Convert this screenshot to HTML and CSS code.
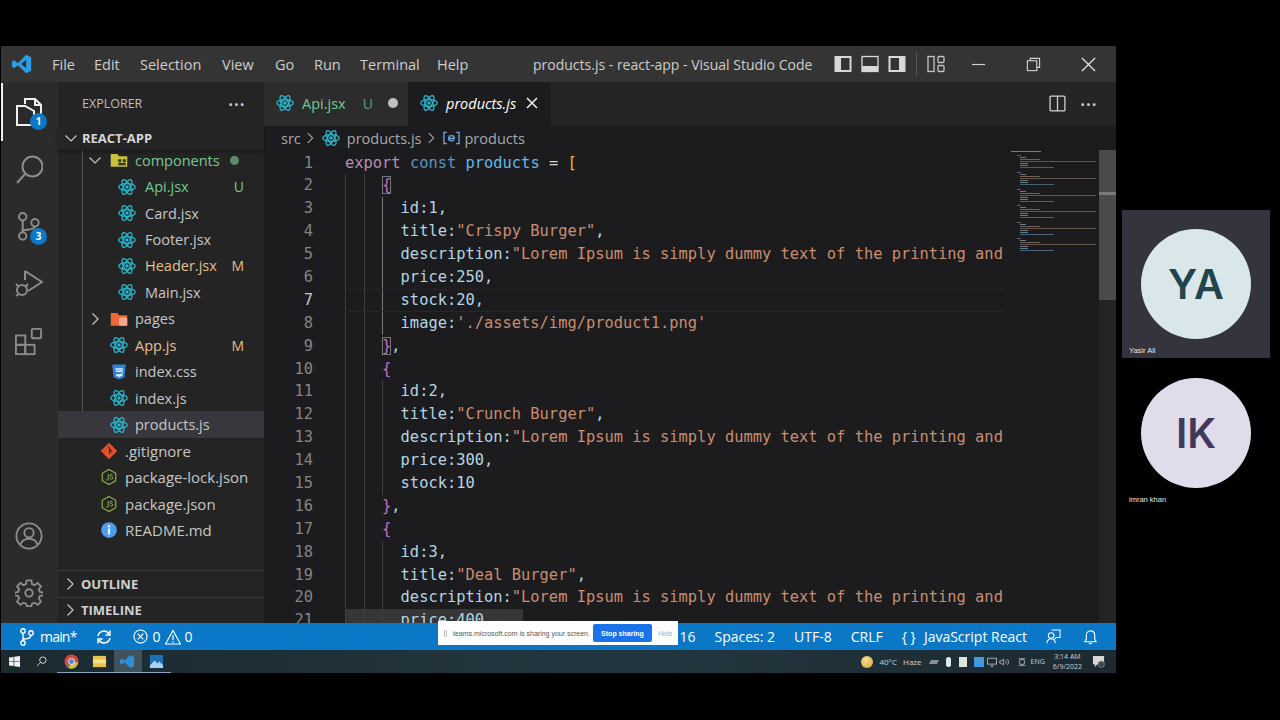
FILE: index.html
```html
<!DOCTYPE html>
<html lang="en">
<head>
<meta charset="utf-8">
<title>products.js - react-app - Visual Studio Code</title>
<link rel="stylesheet" href="styles.css">
</head>
<body>
<svg class="defs" width="0" height="0" aria-hidden="true">
  <symbol id="react" viewBox="0 0 24 24">
    <g fill="none" stroke="#26b8cf" stroke-width="1.7">
      <ellipse cx="12" cy="12" rx="11" ry="4.4"/>
      <ellipse cx="12" cy="12" rx="11" ry="4.4" transform="rotate(60 12 12)"/>
      <ellipse cx="12" cy="12" rx="11" ry="4.4" transform="rotate(120 12 12)"/>
    </g>
    <circle cx="12" cy="12" r="2.3" fill="#26b8cf"/>
  </symbol>
  <symbol id="node" viewBox="0 0 24 24">
    <path d="M12 2l9 5v10l-9 5-9-5V7z" fill="none" stroke="#8cb24a" stroke-width="1.6"/>
    <path d="M11 8v7c0 1.600-2.500 1.600-3 .3M17 9.500c-.8-1.500-3.800-1.300-3.800.4 0 2 4 1.100 4 3.300 0 1.800-3.400 1.900-4.300.3" fill="none" stroke="#8cb24a" stroke-width="1.300"/>
  </symbol>
  <symbol id="chev-d" viewBox="0 0 16 16"><path d="M2.500 5.500L8 11l5.500-5.500" fill="none" stroke="currentColor" stroke-width="1.200"/></symbol>
  <symbol id="chev-r" viewBox="0 0 16 16"><path d="M5.500 2.500L11 8l-5.500 5.500" fill="none" stroke="currentColor" stroke-width="1.200"/></symbol>
</svg>

<div class="stage">
  <main class="window">
    <header class="titlebar">
      <svg class="logo" viewBox="0 0 24 24"><path d="M17 1l6 3v16l-6 3-10-9.500-4.500 3.500L0 15V9l2.500-1.500L7 11zM17 7l-6 5 6 5z" fill="#2b9fe6" fill-rule="evenodd"/></svg>
      <nav class="menu">
        <span class="m-file">File</span><span class="m-edit">Edit</span><span class="m-sel">Selection</span><span class="m-view">View</span><span class="m-go">Go</span><span class="m-run">Run</span><span class="m-term">Terminal</span><span class="m-help">Help</span>
      </nav>
      <div class="wintitle">products.js - react-app - Visual Studio Code</div>
      <div class="layout-icons">
        <svg viewBox="0 0 18 18"><rect x=".5" y="1" width="17" height="16" fill="#d8d8d8"/><rect x="7" y="3" width="8.500" height="12" fill="#333"/></svg>
        <svg viewBox="0 0 18 18"><rect x="1" y="1.500" width="16" height="15" fill="none" stroke="#d8d8d8" stroke-width="1.300"/><rect x="1" y="11" width="16" height="6" fill="#d8d8d8"/></svg>
        <svg viewBox="0 0 18 18"><rect x=".5" y="1" width="17" height="16" fill="#d8d8d8"/><rect x="2.500" y="3" width="8.500" height="12" fill="#333"/></svg>
        <i class="tsep"></i>
        <svg viewBox="0 0 18 18" fill="none" stroke="#c4c4c4" stroke-width="1.300"><rect x="1" y="1.500" width="6" height="15"/><rect x="11" y="1.500" width="6" height="6" rx="1"/><rect x="11" y="10.500" width="6" height="6" rx="1"/></svg>
      </div>
      <div class="wincontrols">
        <svg viewBox="0 0 16 16"><path d="M1 8h14" stroke="#d0d0d0" stroke-width="1.200"/></svg>
        <svg viewBox="0 0 16 16" fill="none" stroke="#d0d0d0" stroke-width="1.200"><rect x="1.500" y="4" width="10" height="10.500"/><path d="M4.500 4V1.500h10V11H11.500"/></svg>
        <svg viewBox="0 0 16 16"><path d="M1 1l14 14M15 1L1 15" stroke="#e0e0e0" stroke-width="1.400"/></svg>
      </div>
    </header>

    <div class="workbench">
      <aside class="activity">
        <div class="act-top">
          <div class="act-item is-on">
            <svg viewBox="0 0 28 30" fill="none" stroke="#f0f0f0" stroke-width="2"><path d="M10 7V2h10l6 6v15H19"/><path d="M20 2v6h6"/><path d="M10 9H2v19h17V14z"/></svg>
            <b class="badge">1</b>
          </div>
          <div class="act-item">
            <svg viewBox="0 0 28 30" fill="none" stroke="#8c8c8c" stroke-width="2"><circle cx="17.500" cy="12.500" r="10"/><path d="M10 20l-8 9"/></svg>
          </div>
          <div class="act-item">
            <svg viewBox="0 0 28 30" fill="none" stroke="#8c8c8c" stroke-width="2"><circle cx="7.700" cy="4.700" r="3.700"/><circle cx="7.700" cy="24" r="3.700"/><circle cx="20" cy="10.700" r="3.700"/><path d="M7.700 8.400v12M7.700 18c7 0 12-1 12.300-3.600"/></svg>
            <b class="badge">3</b>
          </div>
          <div class="act-item">
            <svg viewBox="0 0 28 30" fill="none" stroke="#8c8c8c" stroke-width="2"><path d="M10 2l17 11-14 9"/><path d="M10 2v9"/><circle cx="7" cy="21" r="5"/><path d="M1 15l3 3M1 27l3-2M13 15l-3 3"/></svg>
          </div>
          <div class="act-item">
            <svg viewBox="0 0 30 30" fill="none" stroke="#8c8c8c" stroke-width="2"><rect x="1" y="8" width="10" height="10"/><rect x="1" y="18" width="10" height="10"/><rect x="11" y="18" width="10" height="10"/><rect x="18" y="1" width="10" height="10" rx="1"/></svg>
          </div>
        </div>
        <div class="act-bottom">
          <div class="act-item">
            <svg viewBox="0 0 30 30" fill="none" stroke="#8c8c8c" stroke-width="2"><circle cx="15" cy="15" r="13.500"/><circle cx="15" cy="11.500" r="5"/><path d="M5.500 24.500c2-5 5-6.500 9.500-6.500s7.500 1.500 9.500 6.500"/></svg>
          </div>
          <div class="act-item">
            <svg viewBox="0 0 30 30" fill="none" stroke="#8c8c8c" stroke-width="2"><circle cx="15" cy="15" r="4"/><path d="M12.500 1.500h5l.8 4 2.600 1.100 3.400-2.300 3.500 3.500-2.300 3.400 1.100 2.600 4 .8v2.800l-4 .8-1.100 2.600 2.300 3.400-3.500 3.500-3.400-2.300-2.600 1.100-.8 2.600h-5l-.8-2.600-2.600-1.100-3.400 2.300-3.500-3.500 2.300-3.400-1.100-2.600-4-.8v-2.800l4-.8 1.100-2.600-2.300-3.400 3.500-3.500 3.400 2.300 2.600-1.100z"/></svg>
          </div>
        </div>
      </aside>

      <aside class="sidebar">
        <div class="side-head"><span>EXPLORER</span><span class="dots">···</span></div>
        <div class="root-row"><svg class="chev"><use href="#chev-d"/></svg><span>REACT-APP</span></div>
        <div class="tree">
          <div class="guide">
            <div class="row r-folder green"><svg class="chev"><use href="#chev-d"/></svg>
              <svg class="ficon" viewBox="0 0 24 24"><path d="M1 4h9l2 3h11v14H1z" fill="#c9c23a"/><rect x="11" y="11" width="4" height="4" fill="#33352a"/><rect x="17" y="11" width="4" height="4" fill="#33352a"/><rect x="11" y="16" width="10" height="3" fill="#33352a"/></svg>
              <span>components</span><i class="dot"></i></div>
            <div class="row r-file green"><svg class="ficon"><use href="#react"/></svg><span>Api.jsx</span><b class="st">U</b></div>
            <div class="row r-file"><svg class="ficon"><use href="#react"/></svg><span>Card.jsx</span></div>
            <div class="row r-file"><svg class="ficon"><use href="#react"/></svg><span>Footer.jsx</span></div>
            <div class="row r-file yellow"><svg class="ficon"><use href="#react"/></svg><span>Header.jsx</span><b class="st">M</b></div>
            <div class="row r-file"><svg class="ficon"><use href="#react"/></svg><span>Main.jsx</span></div>
            <div class="row r-folder"><svg class="chev"><use href="#chev-r"/></svg>
              <svg class="ficon" viewBox="0 0 24 24"><path d="M1 4h9l2 3h11v14H1z" fill="#f0683a"/><rect x="12" y="10" width="11" height="11" rx="2" fill="#f6a98f"/></svg>
              <span>pages</span></div>
            <div class="row r-top yellow"><svg class="ficon"><use href="#react"/></svg><span>App.js</span><b class="st">M</b></div>
            <div class="row r-top"><svg class="ficon" viewBox="0 0 24 24"><path d="M3 2h18l-1.700 17L12 22l-7.300-3z" fill="#2f83d6"/><path d="M7 7h10l-.6 10-4.400 1.500L8 17v-2h4l4-1V12H8V10h8V9H7z" fill="#e6f0fa"/></svg><span>index.css</span></div>
            <div class="row r-top"><svg class="ficon"><use href="#react"/></svg><span>index.js</span></div>
            <div class="row r-top is-sel"><svg class="ficon"><use href="#react"/></svg><span>products.js</span></div>
          </div>
          <div class="row r-root"><svg class="ficon" viewBox="0 0 24 24"><path d="M12 1l11 11-11 11L1 12z" fill="#e2522f"/><path d="M11 6l2 3v7M13 10l3 3" stroke="#3a2520" stroke-width="1.600" fill="none"/></svg><span>.gitignore</span></div>
          <div class="row r-root"><svg class="ficon"><use href="#node"/></svg><span>package-lock.json</span></div>
          <div class="row r-root"><svg class="ficon"><use href="#node"/></svg><span>package.json</span></div>
          <div class="row r-root"><svg class="ficon" viewBox="0 0 24 24"><circle cx="12" cy="12" r="10.500" fill="#4d9cf0"/><rect x="10.500" y="10" width="3" height="8" fill="#eaf3ff"/><rect x="10.500" y="5.500" width="3" height="3" fill="#eaf3ff"/></svg><span>README.md</span></div>
        </div>
        <div class="panel-row"><svg class="chev"><use href="#chev-r"/></svg><span>OUTLINE</span></div>
        <div class="panel-row"><svg class="chev"><use href="#chev-r"/></svg><span>TIMELINE</span></div>
      </aside>

      <section class="editor">
        <div class="tabs">
          <div class="tab tab-api"><svg class="ficon"><use href="#react"/></svg><span class="t-name">Api.jsx</span><b class="t-u">U</b><i class="t-dot"></i></div>
          <div class="tab tab-on"><svg class="ficon"><use href="#react"/></svg><span class="t-name">products.js</span>
            <svg class="t-x" viewBox="0 0 12 12"><path d="M1 1l10 10M11 1L1 11" stroke="#f0f0f0" stroke-width="1.500"/></svg></div>
          <div class="tab-actions">
            <svg viewBox="0 0 16 16" fill="none" stroke="#d4d4d4" stroke-width="1.200"><rect x="1" y="1" width="14" height="14" rx="1"/><path d="M8 1v14"/></svg>
            <span class="dots">···</span>
          </div>
        </div>
        <div class="crumbs">
          <span>src</span><svg class="cchev c1"><use href="#chev-r"/></svg>
          <svg class="ficon"><use href="#react"/></svg><span>products.js</span><svg class="cchev"><use href="#chev-r"/></svg>
          <svg class="sym" viewBox="0 0 18 14" fill="none" stroke="#6fa8dc" stroke-width="1.400"><path d="M4 1H1v12h3M14 1h3v12h-3"/><path d="M6 7.500h6c0-2-1-3-3-3s-3 1.500-3 3 1 2.500 3 2.500c1 0 2-.3 2.500-1"/></svg>
          <span>products</span>
        </div>
        <div class="edit-body">
          <div class="gutter">
            <span>1</span><span>2</span><span>3</span><span>4</span><span>5</span><span>6</span><span class="cur">7</span><span>8</span><span>9</span><span>10</span><span>11</span><span>12</span><span>13</span><span>14</span><span>15</span><span>16</span><span>17</span><span>18</span><span>19</span><span>20</span><span>21</span>
          </div>
          <div class="code">
            <div class="ln"><span class="kw">export</span> <span class="st2">const</span> <span class="var">products</span> <span class="pl">=</span> <span class="br1">[</span></div>
            <div class="ln g">    <span class="br2 match">{</span></div>
            <div class="ln g3 a"><span class="pl2">      id:1,</span></div>
            <div class="ln g3 a"><span class="pl2">      title:</span><span class="str">"Crispy Burger"</span><span class="pl2">,</span></div>
            <div class="ln g3 a"><span class="pl2">      description:</span><span class="str">"Lorem Ipsum is simply dummy text of the printing and</span></div>
            <div class="ln g3 a"><span class="pl2">      price:250,</span></div>
            <div class="ln g3 a cur"><span class="pl2">      stock:20,</span></div>
            <div class="ln g3 a"><span class="pl2">      image:</span><span class="str">'./assets/img/product1.png'</span></div>
            <div class="ln g">    <span class="br2 match">}</span><span class="pl2">,</span></div>
            <div class="ln g">    <span class="br2">{</span></div>
            <div class="ln g3"><span class="pl2">      id:2,</span></div>
            <div class="ln g3"><span class="pl2">      title:</span><span class="str">"Crunch Burger"</span><span class="pl2">,</span></div>
            <div class="ln g3"><span class="pl2">      description:</span><span class="str">"Lorem Ipsum is simply dummy text of the printing and</span></div>
            <div class="ln g3"><span class="pl2">      price:300,</span></div>
            <div class="ln g3"><span class="pl2">      stock:10</span></div>
            <div class="ln g">    <span class="br2">}</span><span class="pl2">,</span></div>
            <div class="ln g">    <span class="br2">{</span></div>
            <div class="ln g3"><span class="pl2">      id:3,</span></div>
            <div class="ln g3"><span class="pl2">      title:</span><span class="str">"Deal Burger"</span><span class="pl2">,</span></div>
            <div class="ln g3"><span class="pl2">      description:</span><span class="str">"Lorem Ipsum is simply dummy text of the printing and</span></div>
            <div class="ln g3 hi"><span class="pl2">      price:400,</span></div>
          </div>
          <div class="minimap">
            <svg viewBox="0 0 91 110" width="91" height="110">
              <rect x="3" y="1" width="30" height="1" fill="#7a7a7a"/>
              <g id="mm" opacity=".75">
                <rect x="9" y="5" width="4" height="1" fill="#8a6f8a"/>
                <rect x="12" y="7" width="6" height="1" fill="#7d9cab"/>
                <rect x="12" y="9" width="20" height="1" fill="#8d7a66"/>
                <rect x="12" y="11" width="76" height="1" fill="#7b6a5a"/>
                <rect x="12" y="13" width="8" height="1" fill="#7d9cab"/>
                <rect x="12" y="15" width="8" height="1" fill="#7d9cab"/>
                <rect x="12" y="17" width="34" height="1" fill="#55788f"/>
              </g>
              <use href="#mm" y="17"/><use href="#mm" y="34"/><use href="#mm" y="50"/><use href="#mm" y="67"/><use href="#mm" y="83"/>
            </svg>
          </div>
          <div class="scrollbar"><div class="thumb"><i></i></div></div>
        </div>
      </section>
    </div>

    <footer class="statusbar">
      <div class="sb-left">
        <svg class="branch" viewBox="0 0 14 18" fill="none" stroke="#fff" stroke-width="1.400"><circle cx="3" cy="3" r="2.200"/><circle cx="3" cy="15" r="2.200"/><circle cx="11" cy="5" r="2.200"/><path d="M3 5.200v7.600M3 11c5 0 8-1 8-3.800"/></svg>
        <span class="sb-main">main*</span>
        <svg class="sync" viewBox="0 0 16 16" fill="none" stroke="#fff" stroke-width="1.500"><path d="M2 7a6 6 0 0 1 11-2M14 9a6 6 0 0 1-11 2"/><path d="M14 1.500V6h-4.500M2 14.500V10h4.500"/></svg>
        <svg class="err" viewBox="0 0 16 16" fill="none" stroke="#fff" stroke-width="1.200"><circle cx="8" cy="8" r="7"/><path d="M5 5l6 6M11 5l-6 6"/></svg>
        <span>0</span>
        <svg class="warn" viewBox="0 0 16 16" fill="none" stroke="#fff" stroke-width="1.200"><path d="M8 1.500L15.500 15H.5z"/><path d="M8 6v5M8 12v1.500"/></svg>
        <span>0</span>
      </div>
      <div class="sb-right">
        <span>16</span>
        <span>Spaces: 2</span>
        <span>UTF-8</span>
        <span>CRLF</span>
        <span class="lang"><b>{ }</b>JavaScript React</span>
        <svg class="feed" viewBox="0 0 16 16" fill="none" stroke="#fff" stroke-width="1.100"><circle cx="5.500" cy="7" r="3"/><path d="M1 15c.5-3 2-4.500 4.500-4.500S9.500 12 10 15M6 1h9v8h-4l-2 2"/></svg>
        <svg class="bell" viewBox="0 0 16 16" fill="none" stroke="#fff" stroke-width="1.200"><path d="M8 1.500c-3 0-4.500 2.500-4.500 5v4L2 13h12l-1.500-2.500v-4c0-2.500-1.500-5-4.500-5zM6.500 14.500c.5 1 2.500 1 3 0"/></svg>
      </div>
    </footer>

    <footer class="taskbar">
      <div class="tb-left">
        <svg class="winlogo" viewBox="0 0 12 12" fill="#f0f0f0"><path d="M0 1.700L5 1v4.700H0zM5.700 .9L12 0v5.700H5.700zM0 6.300h5V11l-5-.7zM5.700 6.300H12V12l-6.300-.9z"/></svg>
        <svg class="tsearch" viewBox="0 0 12 12" fill="none" stroke="#ddd" stroke-width="1"><circle cx="7.500" cy="4.500" r="3.500"/><path d="M5 7l-4 4"/></svg>
        <div class="tb-app">
          <svg viewBox="0 0 16 16"><circle cx="8" cy="8" r="7.500" fill="#d9483b"/><path d="M8 8L14.500 12A7.500 7.500 0 0 1 3 14z" fill="#3f9b52"/><path d="M8 8L5 15A7.500 7.500 0 0 0 15 9z" fill="#e5b83a"/><circle cx="8" cy="8" r="3.200" fill="#4a8be0" stroke="#eee"/></svg>
        </div>
        <div class="tb-app">
          <svg viewBox="0 0 16 16"><rect x="1" y="2" width="14" height="12" fill="#e8c04e"/><rect x="1" y="6" width="14" height="4" fill="#f5df8a"/></svg>
        </div>
        <div class="tb-app tb-on">
          <svg viewBox="0 0 16 16"><path d="M11 1l4 2v10l-4 2-6-6-3 2-2-1V6l2-1 3 2z" fill="#2b8fd9"/></svg>
        </div>
        <div class="tb-app">
          <svg viewBox="0 0 16 16"><rect x="1" y="1" width="14" height="14" fill="#1f6fb5"/><path d="M1 12l5-5 3 3 2-2 4 4v3H1z" fill="#a9d2f0"/></svg>
        </div>
      </div>
      <div class="tray">
        <i class="sun"></i><span class="t-w1">40°C</span><span class="t-w2">Haze</span>
        <i class="t-ic feather"></i><i class="t-ic mic"></i><i class="t-ic sec"></i><i class="t-ic blue"></i>
        <svg class="t-svg t-mon" viewBox="0 0 12 12" fill="none" stroke="#bbb"><rect x=".5" y="1.500" width="11" height="7"/><path d="M4 11h4M6 9v2"/></svg>
        <svg class="t-svg t-snd" viewBox="0 0 12 12" fill="none" stroke="#bbb"><path d="M1 4.500v3h2l2.500 2v-7L3 4.500zM8 4c1 1 1 3 0 4M10 2.500c2 2 2 5 0 7"/></svg>
        <svg class="t-svg t-net" viewBox="0 0 12 12" fill="none" stroke="#bbb"><path d="M2 2h8M2 10h8"/><ellipse cx="6" cy="6" rx="3.500" ry="3"/></svg>
        <span class="t-eng">ENG</span>
        <div class="clock"><span>3:14 AM</span><span>6/9/2022</span></div>
        <svg class="t-note" viewBox="0 0 14 14"><path d="M1 1h12v9H6l-3 3v-3H1z" fill="#d8d8d8"/><circle cx="10" cy="10" r="3.500" fill="#3a4a50" stroke="#aaa" stroke-width=".5"/></svg>
      </div>
    </footer>

    <div class="sharebar">
      <i class="grip"></i>
      <span class="sb-msg">teams.microsoft.com is sharing your screen.</span>
      <span class="sb-stop">Stop sharing</span>
      <span class="sb-hide">Hide</span>
    </div>
  </main>

  <aside class="people">
    <div class="tile tile-ya">
      <div class="avatar av-ya">YA</div>
      <span class="pname">Yasir Ali</span>
    </div>
    <div class="tile tile-ik">
      <div class="avatar av-ik">IK</div>
      <span class="pname">imran khan</span>
    </div>
  </aside>
</div>
</body>
</html>
```
FILE: styles.css
```css
* { box-sizing: border-box; }
html, body { margin: 0; height: 100%; background: #000; overflow: hidden; }
body { font-family: "Open Sans", "Noto Sans", "Liberation Sans", sans-serif; color: #cfcfcf; }
.defs { position: absolute; }
svg { display: block; flex: none; }

.stage { display: flex; height: 720px; padding: 46px 0 0 1px; }
.window { position: relative; width: 1115px; height: 627px; display: flex; flex-direction: column; background: #1c1c1e; overflow: hidden; }

/* title bar */
.titlebar { height: 36px; flex: none; background: #343434; display: flex; align-items: center; font-size: 14.5px; color: #cdcdcd; }
.logo { width: 20px; height: 20px; margin-left: 11px; }
.menu { display: flex; margin-left: 20px; }
.menu span { display: block; }
.m-file { width: 42px; } .m-edit { width: 46px; } .m-sel { width: 82px; } .m-view { width: 53px; }
.m-go { width: 39px; } .m-run { width: 46px; } .m-term { width: 77px; } .m-help { width: 40px; }
.wintitle { margin-left: 56px; width: 298px; white-space: nowrap; font-size: 14px; }
.layout-icons { display: flex; align-items: center; gap: 9px; margin-left: 3px; }
.layout-icons svg { width: 18px; height: 18px; }
.tsep { width: 1px; height: 24px; background: #555; margin: 0 1px; }
.wincontrols { display: flex; gap: 40px; margin-left: 26px; }
.wincontrols svg { width: 15px; height: 15px; }

/* workbench */
.workbench { flex: 1; display: flex; min-height: 0; }
.activity { width: 57px; flex: none; background: #2b2b2b; display: flex; flex-direction: column; justify-content: space-between; }
.act-item { position: relative; height: 57.500px; display: flex; align-items: center; justify-content: center; padding-right: 2px; }
.act-item svg { width: 28px; height: 30px; }
.act-top { padding-top: 1px; }
.act-item.is-on { border-left: 2px solid #eee; padding-right: 4px; }
.act-bottom { padding-bottom: 1px; }
.badge { position: absolute; right: 11px; bottom: 11px; width: 17px; height: 17px; border-radius: 50%; background: #0b78c8; color: #fff; font-size: 10px; font-weight: 700; display: flex; align-items: center; justify-content: center; }

.sidebar { width: 206px; flex: none; background: #242425; display: flex; flex-direction: column; font-size: 15px; }
.side-head { height: 44px; flex: none; display: flex; align-items: center; justify-content: space-between; padding: 0 19px 2px 24px; font-size: 12.5px; color: #bdbdbd; }
.dots { font-size: 22px; line-height: 1; color: #d0d0d0; }
.root-row { height: 24px; flex: none; margin-bottom: -3px; position: relative; z-index: 1; background: #242425; box-shadow: 0 2px 3px rgba(0,0,0,.35); display: flex; align-items: center; padding-left: 5px; font-size: 13px; font-weight: 700; color: #d6d6d6; gap: 3px; }
.chev { width: 16px; height: 16px; color: #c8c8c8; }
.tree { flex: 1; min-height: 0; overflow: hidden; }
.guide { font-size: 14.500px; background: linear-gradient(#555,#555) 24px 0 / 1px 100% no-repeat; }
.row { height: 26.450px; display: flex; align-items: center; white-space: nowrap; color: #c6c6c6; position: relative; }
.row .ficon { width: 18px; height: 18px; margin-right: 7px; }
.r-folder { padding-left: 29px; }
.r-folder .chev { margin-right: 7px; }
.r-file { padding-left: 60px; }
.r-file .ficon { margin-right: 9px; }
.r-top { padding-left: 52px; }
.r-root { padding-left: 42px; }
.green { color: #73c991; }
.yellow { color: #e2c08d; }
.st { position: absolute; right: 20px; font-weight: 400; font-size: 14px; }
.dot { width: 9px; height: 9px; border-radius: 50%; background: #5d8a6c; margin-left: 10px; }
.is-sel { background: #37373d; }
.panel-row { height: 26.500px; flex: none; border-top: 1px solid #3c3c3c; display: flex; align-items: center; padding-left: 4px; gap: 3px; font-size: 13px; font-weight: 700; color: #d0d0d0; }

/* editor */
.editor { flex: 1; min-width: 0; display: flex; flex-direction: column; }
.tabs { height: 44px; flex: none; background: #252526; display: flex; }
.tab { display: flex; align-items: center; font-size: 14.5px; height: 44px; padding-bottom: 2px; }
.tab .ficon { width: 18px; height: 18px; margin-right: 8px; }
.tab-api { width: 144px; padding-left: 12px; background: #2c2c2d; color: #73c991; }
.t-u { font-weight: 400; font-size: 14px; margin-left: 17px; color: #5f9c74; }
.t-dot { width: 10px; height: 10px; border-radius: 50%; background: #c0c0c0; margin-left: 15px; }
.tab-on { width: 143px; padding-left: 12px; background: #1c1c1e; color: #fff; font-style: italic; }
.t-x { width: 12px; height: 12px; margin-left: 10px; }
.tab-actions { margin-left: auto; display: flex; align-items: center; gap: 14px; padding: 0 19px 2px 0; }
.tab-actions svg { width: 17px; height: 17px; }
.crumbs { height: 24px; flex: none; display: flex; align-items: center; padding-left: 17px; font-size: 14.5px; color: #a9a9a9; }
.crumbs .ficon { width: 18px; height: 18px; margin-right: 7px; }
.cchev { width: 14px; height: 14px; color: #b0b0b0; margin: 0 5px 0 2px; }
.sym { width: 17px; height: 14px; margin-right: 5px; }

.edit-body { flex: 1; min-height: 0; display: flex; overflow: hidden; }
.gutter { width: 49px; flex: none; display: flex; flex-direction: column; align-items: flex-end; padding-top: 1.500px; font: 15.400px/22.900px "DejaVu Sans Mono", monospace; color: #858585; }
.gutter span { height: 22.900px; }
.gutter .cur { color: #c6c6c6; }
.code { width: 658px; margin-left: 32px; flex: none; overflow: hidden; padding-top: 1.500px; font: 15.400px/22.900px "DejaVu Sans Mono", monospace; }
.ln { height: 22.900px; overflow: hidden; white-space: pre; }
.ln.g { background: linear-gradient(#3e3e3e,#3e3e3e) 0 0 / 1px 100% no-repeat, linear-gradient(#3e3e3e,#3e3e3e) 18.500px 0 / 1px 100% no-repeat; }
.ln.g3 { background: linear-gradient(#3e3e3e,#3e3e3e) 0 0 / 1px 100% no-repeat, linear-gradient(#3e3e3e,#3e3e3e) 18.500px 0 / 1px 100% no-repeat, linear-gradient(#3e3e3e,#3e3e3e) 37px 0 / 1px 100% no-repeat; }
.ln.a { background: linear-gradient(#3e3e3e,#3e3e3e) 0 0 / 1px 100% no-repeat, linear-gradient(#3e3e3e,#3e3e3e) 18.500px 0 / 1px 100% no-repeat, linear-gradient(#7a7a7a,#7a7a7a) 37px 0 / 1px 100% no-repeat; }
.ln.cur { box-shadow: inset 0 1px 0 #272728, inset 0 -1px 0 #272728; }
.ln.hi { background: linear-gradient(#3e3e3e,#3e3e3e) 0 0 / 1px 100% no-repeat, linear-gradient(#3e3e3e,#3e3e3e) 18.500px 0 / 1px 100% no-repeat, linear-gradient(#3e3e3e,#3e3e3e) 37px 0 / 1px 100% no-repeat, linear-gradient(#363636,#363636) 0 0 / 178px 100% no-repeat; }
.kw { color: #b98cb3; }
.st2 { color: #5b93bf; }
.var { color: #63b9ea; }
.pl { color: #d4d4d4; }
.br1 { color: #e3c31a; }
.br2 { color: #c86cc4; }
.match { outline: 1px solid #777; outline-offset: -1px; }
.pl2 { color: #b5d5e3; }
.str { color: #c98d6f; }

.minimap { width: 96px; flex: none; padding-left: 5px; background: #1c1c1e; }
.scrollbar { flex: 1; background: #242425; }
.thumb { height: 150px; background: #4a4a4a; padding-top: 42px; }
.thumb i { display: block; height: 3px; background: #7a7a7a; }

/* status bar */
.statusbar { height: 27px; flex: none; background: #0a78c6; color: #fff; display: flex; align-items: center; justify-content: space-between; font-size: 14px; white-space: nowrap; }
.sb-left { display: flex; align-items: center; padding-left: 19px; }
.branch { width: 14px; height: 18px; margin-right: 6px; }
.sb-main { letter-spacing: -.8px; }
.sync { width: 16px; height: 16px; margin-left: 19px; margin-right: 21px; }
.err { width: 15px; height: 15px; margin-right: 5px; }
.warn { width: 16px; height: 16px; margin: 0 4px; }
.sb-right { display: flex; align-items: center; gap: 19px; padding-right: 18px; }
.lang b { font-weight: 400; margin-right: 8px; }
.feed { width: 15px; height: 15px; }
.bell { width: 15px; height: 16px; margin-left: 3px; }

/* taskbar */
.taskbar { height: 23px; flex: none; background: linear-gradient(90deg,#1c2a30,#23363f 55%,#1c2a31); display: flex; align-items: center; justify-content: space-between; }
.tb-left { display: flex; align-items: center; height: 100%; padding-left: 8px; }
.winlogo { width: 11px; height: 11px; }
.tsearch { width: 11px; height: 11px; margin: 0 10px 0 16px; }
.tb-app { width: 28.400px; height: 100%; display: flex; align-items: center; justify-content: center; border-bottom: 1px solid #7fa8c4; }
.tb-app svg { width: 15px; height: 15px; }
.tb-on { background: #41525a; }
.tray { display: flex; align-items: center; gap: 6px; font-size: 8px; color: #cfcfcf; padding-right: 11px; white-space: nowrap; }
.sun { width: 12px; height: 12px; border-radius: 50%; background: radial-gradient(circle at 40% 35%, #f4dc8a, #d9a83e); }
.t-ic { width: 8px; height: 10px; display: block; }
.feather { background: #8a8f94; transform: skewX(-30deg); height: 4px; }
.mic { background: #dfe6ea; border-radius: 3px; width: 5px; margin: 0 2px; }
.sec { background: #d8e6e0; margin-right: 1px; }
.blue { background: #3f9adf; width: 10px; }
.t-svg { width: 10px; height: 10px; }
.t-mon { margin-left: -3px; }
.t-snd { margin-left: -4px; }
.t-net { margin: 0 -2px 0 2px; }
.t-w2 { margin-right: 2px; }
.t-eng { font-size: 7px; }
.clock { display: flex; flex-direction: column; align-items: center; font-size: 7px; line-height: 10px; margin-left: 2px; margin-right: 4px; }
.t-note { width: 13px; height: 13px; }

/* screen-share banner */
.sharebar { position: absolute; left: 437px; top: 575px; width: 240px; height: 24px; background: #fff; display: flex; align-items: center; padding-left: 6px; font-family: "Liberation Sans", sans-serif; font-size: 7px; color: #555; white-space: nowrap; }
.grip { width: 3px; height: 7px; border-left: 1px solid #bbb; border-right: 1px solid #bbb; margin-right: 6px; }
.sb-msg { width: 140px; }
.sb-stop { width: 59px; height: 18px; background: #1a73e8; border-radius: 2px; color: #fff; font-weight: 700; display: flex; align-items: center; justify-content: center; }
.sb-hide { margin-left: 6px; color: #8ab0e8; }

/* participants */
.people { margin-left: 6px; padding-top: 164px; width: 148px; }
.tile { position: relative; width: 148px; height: 148px; display: flex; justify-content: center; padding-top: 19px; }
.tile-ya { background: #33343d; }
.tile-ik { margin-top: 1px; }
.avatar { width: 110px; height: 110px; border-radius: 50%; display: flex; align-items: center; justify-content: center; font-family: Inter, "Liberation Sans", sans-serif; font-weight: 600; font-size: 41px; }
.av-ya { background: #d9e6ea; color: #23434d; }
.av-ik { background: #e0dcea; color: #3f3a5c; }
.pname { position: absolute; left: 7px; bottom: 3px; font-size: 7.500px; color: #e6e6e6; font-family: "Liberation Sans", sans-serif; }
```
